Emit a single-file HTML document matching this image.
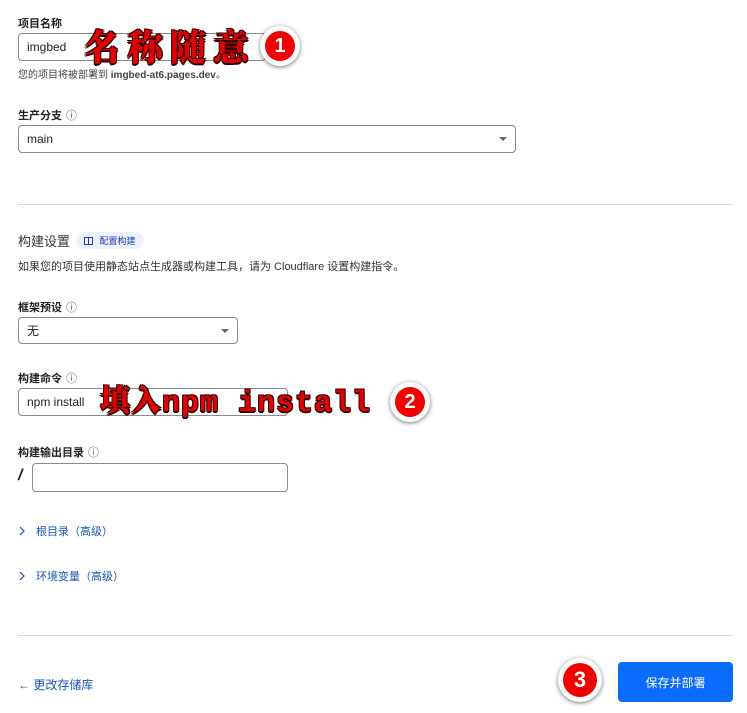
<!DOCTYPE html>
<html><head><meta charset="utf-8"><style>
body{margin:0;width:747px;height:713px;background:#fff;position:relative;overflow:hidden;font-family:"Liberation Sans","Noto Sans CJK SC",sans-serif;color:#222}
.a{position:absolute}
.lbl{font-size:11px;font-weight:bold;color:#222}
.lbl i{font-style:normal;font-weight:normal;font-size:11px;color:#555;margin-left:4px}
.box{position:absolute;border:1px solid #8a8a8a;border-radius:4px;background:#fff;box-sizing:border-box;font-size:12px;color:#222;padding-left:8px;display:flex;align-items:center}
.arr{position:absolute;right:8px;top:50%;margin-top:-2px;width:0;height:0;border-left:4px solid transparent;border-right:4px solid transparent;border-top:4px solid #666}
.hr{position:absolute;left:18px;right:14px;height:1px;background:#d9d9d9}
.link{font-size:11px;color:#1d57b5;display:flex;align-items:center}
.big{position:absolute;font-family:"Noto Serif CJK SC","Liberation Mono",monospace;font-weight:900;color:#e00000;text-shadow:-1px -1px 0 #300,1px -1px 0 #300,-1px 1px 0 #300,1px 1px 0 #300,0 2px 0 #300;white-space:nowrap}
.c{position:absolute;width:40px;height:40px;border-radius:50%;background:#fff;box-shadow:0 1px 5px rgba(0,0,0,.55);display:flex;align-items:center;justify-content:center}
.c span{width:30px;height:30px;border-radius:50%;background:#f00000;color:#fff;font-weight:bold;font-size:20px;display:flex;align-items:center;justify-content:center}
</style></head><body>
<div class="a lbl" style="left:18px;top:15px">项目名称</div>
<div class="box" style="left:18px;top:33px;width:248px;height:28px">imgbed</div>
<div class="a" style="left:18px;top:66px;font-size:10px;color:#444">您的项目将被部署到 <b>imgbed-at6.pages.dev</b>。</div>
<div class="a lbl" style="left:18px;top:107px">生产分支<i>ⓘ</i></div>
<div class="box" style="left:18px;top:125px;width:498px;height:28px">main<div class="arr"></div></div>
<div class="hr" style="top:204px"></div>
<div class="a" style="left:18px;top:231px;font-size:13px;color:#333">构建设置</div>
<div class="a" style="left:76px;top:232px;width:68px;height:17px;border-radius:9px;background:#eef0fb;font-size:9px;color:#1d3bb5;display:flex;align-items:center;justify-content:center"><svg width="9" height="8" style="margin-right:6px"><rect x="0.5" y="0.5" width="8" height="7" fill="none" stroke="#1d3bb5"/><line x1="4.5" y1="0" x2="4.5" y2="8" stroke="#1d3bb5"/></svg>配置构建</div>
<div class="a" style="left:18px;top:258px;font-size:11px;color:#333">如果您的项目使用静态站点生成器或构建工具，请为 Cloudflare 设置构建指令。</div>
<div class="a lbl" style="left:18px;top:299px">框架预设<i>ⓘ</i></div>
<div class="box" style="left:18px;top:317px;width:220px;height:27px">无<div class="arr"></div></div>
<div class="a lbl" style="left:18px;top:370px">构建命令<i>ⓘ</i></div>
<div class="box" style="left:18px;top:388px;width:270px;height:28px">npm install</div>
<div class="a lbl" style="left:18px;top:444px">构建输出目录<i>ⓘ</i></div>
<div class="a" style="left:18px;top:467px;font-size:16px;font-weight:bold;font-style:italic">/</div>
<div class="box" style="left:32px;top:463px;width:256px;height:29px"></div>
<div class="a link" style="left:18px;top:523px"><svg width="8" height="10" style="margin-right:10px"><path d="M2 1l4 4-4 4" fill="none" stroke="#1d57b5" stroke-width="1.2"/></svg>根目录（高级）</div>
<div class="a link" style="left:18px;top:568px"><svg width="8" height="10" style="margin-right:10px"><path d="M2 1l4 4-4 4" fill="none" stroke="#1d57b5" stroke-width="1.2"/></svg>环境变量（高级）</div>
<div class="hr" style="top:635px"></div>
<div class="a" style="left:18px;top:676px;font-size:12px;color:#1d57b5">← 更改存储库</div>
<div class="a" style="left:618px;top:662px;width:115px;height:40px;border-radius:4px;background:#0a6cff;color:#fff;font-size:12px;display:flex;align-items:center;justify-content:center">保存并部署</div>
<div class="big" style="left:84px;top:20px;font-size:36px;letter-spacing:7px">名称随意</div>
<div class="big" style="left:100px;top:376px;font-size:30px;letter-spacing:1px;font-family:'Liberation Mono','Noto Serif CJK SC',monospace">填入npm install</div>
<div class="c" style="left:260px;top:26px"><span>1</span></div>
<div class="c" style="left:390px;top:382px"><span>2</span></div>
<div class="c" style="left:558px;top:658px;width:44px;height:44px"><span style="width:34px;height:34px;font-size:22px">3</span></div>
</body></html>
